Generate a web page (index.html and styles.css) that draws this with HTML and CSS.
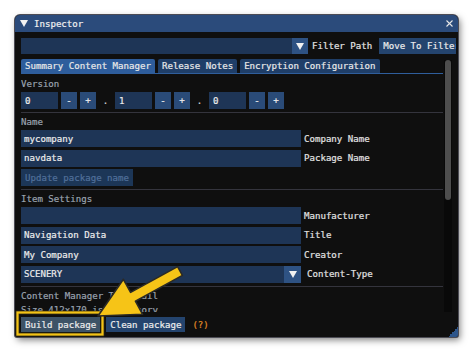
FILE: index.html
```html
<!DOCTYPE html>
<html>
<head>
<meta charset="utf-8">
<link rel="stylesheet" href="styles.css">
</head>
<body>
<div class="window">
  <div class="titlebar">
    <svg class="tri" width="8" height="7" viewBox="0 0 8 7"><polygon points="0,0 8,0 4,7" fill="#f2f2f2"/></svg>
    <span class="title">Inspector</span>
    <svg class="close" width="7" height="7" viewBox="0 0 7 7"><path d="M0.5 0.5 L6.5 6.5 M6.5 0.5 L0.5 6.5" stroke="#e6e6e6" stroke-width="1.1"/></svg>
  </div>
  <div class="filter">
    <div class="frame filter-input"></div>
    <div class="combo-btn"><svg width="8" height="7" viewBox="0 0 8 7"><polygon points="0,0 8,0 4,7" fill="#f2f2f2"/></svg></div>
    <span class="filter-label">Filter Path</span>
    <div class="btn move-btn">Move To Filter</div>
  </div>
  <div class="main">
    <div class="main-col">
      <div class="tabbar">
        <div class="tab active">Summary Content Manager</div>
        <div class="tab">Release Notes</div>
        <div class="tab">Encryption Configuration</div>
      </div>
      <div class="scroll">
        <div class="label first">Version</div>
        <div class="row version">
          <div class="frame num">0</div>
          <div class="btn sq">-</div>
          <div class="btn sq">+</div>
          <span class="dot">.</span>
          <div class="frame num">1</div>
          <div class="btn sq">-</div>
          <div class="btn sq">+</div>
          <span class="dot">.</span>
          <div class="frame num">0</div>
          <div class="btn sq">-</div>
          <div class="btn sq">+</div>
        </div>
        <div class="sep"></div>
        <div class="label">Name</div>
        <div class="row"><div class="frame field">mycompany</div><span class="rlabel">Company Name</span></div>
        <div class="row r2"><div class="frame field">navdata</div><span class="rlabel">Package Name</span></div>
        <div class="row r2"><div class="btn disabled">Update package name</div></div>
        <div class="sep"></div>
        <div class="label">Item Settings</div>
        <div class="row"><div class="frame field"></div><span class="rlabel">Manufacturer</span></div>
        <div class="row r3"><div class="frame field">Navigation Data</div><span class="rlabel">Title</span></div>
        <div class="row r3"><div class="frame field">My Company</div><span class="rlabel">Creator</span></div>
        <div class="row r3">
          <div class="frame field combo"><span class="combo-text">SCENERY</span><div class="combo-arrow"><svg width="8" height="7" viewBox="0 0 8 7"><polygon points="0,0 8,0 4,7" fill="#f2f2f2"/></svg></div></div>
          <span class="rlabel ct">Content-Type</span>
        </div>
        <div class="sep"></div>
        <div class="label">Content Manager Thumbnail</div>
        <div class="label size">Size 412x170 is mandatory</div>
      </div>
    </div>
    <div class="scrollbar"><div class="grab"></div></div>
  </div>
  <div class="bottom">
    <div class="btn build">Build package</div>
    <div class="btn">Clean package</div>
    <span class="help">(?)</span>
  </div>
  <div class="grip"></div>
</div>
<svg class="overlay" width="474" height="353" viewBox="0 0 474 353">
  <rect x="17.5" y="312.5" width="85" height="22" fill="none" stroke="#3a3216" stroke-width="3.6"/>
  <rect x="17.5" y="312.5" width="85" height="22" fill="none" stroke="#f3c316" stroke-width="2.2"/>
  <polygon points="98,316 142.6,314.3 135.4,301.2 182.4,275.4 177.6,266.6 130.6,292.4 123.4,279.3" fill="#f6c417" stroke="#2b2a26" stroke-width="1.6" stroke-linejoin="round"/>
</svg>
</body>
</html>
```

FILE: styles.css
```css
* { box-sizing: border-box; }

body {
  margin: 0;
  width: 474px;
  height: 353px;
  overflow: hidden;
  position: relative;
  background: #ffffff;
  font-family: "DejaVu Sans Mono", "Liberation Mono", monospace;
  font-size: 9.1px;
  color: #e4e4e4;
  -webkit-text-stroke: 0.2px currentColor;
}

.window {
  margin: 15px 0 0 15px;
  width: 443px;
  height: 322px;
  background: #0f0f0f;
  border-radius: 5px 5px 2px 2px;
  box-shadow: 0 0 0 1px #4c4c55, 2px 3px 7px rgba(0, 0, 0, 0.5);
  overflow: hidden;
  position: relative;
  display: flex;
  flex-direction: column;
  white-space: nowrap;
}

.titlebar {
  flex: none;
  height: 17px;
  background: #2b4b7b;
  display: flex;
  align-items: center;
  padding-left: 5px;
  color: #f0f0f0;
}

.tri { margin-right: 6px; flex: none; }

.close { margin-left: auto; margin-right: 5px; }

.filter {
  flex: none;
  margin-top: 6px;
  padding-left: 6px;
  width: 441px;
  height: 16px;
  display: flex;
  align-items: center;
  overflow: hidden;
}

.filter > * { flex-shrink: 0; }

.frame {
  background: #1e3556;
  height: 100%;
  display: flex;
  align-items: center;
  padding-left: 3px;
  color: #ececec;
}

.filter-input { width: 271px; }

.combo-btn {
  width: 16px;
  height: 16px;
  background: #2e5283;
  display: flex;
  align-items: center;
  justify-content: center;
}

.filter-label { margin-left: 4px; }

.btn {
  background: #24446e;
  padding: 0 4px;
  height: 100%;
  display: flex;
  align-items: center;
  color: #ececec;
}

.move-btn { margin-left: 7px; height: 16px; }

.main {
  flex: none;
  margin-top: 5px;
  padding-left: 6px;
  height: 253px;
  display: flex;
}

.main-col {
  width: 422px;
  display: flex;
  flex-direction: column;
}

.tabbar {
  flex: none;
  height: 15px;
  display: flex;
  gap: 3px;
  border-bottom: 1px solid #2f5e9c;
}

.tab {
  padding: 0 4px;
  background: #1f3e68;
  border-radius: 2px 2px 0 0;
  line-height: 14px;
  color: #e8e8e8;
}

.tab.active { background: #2e5d9c; }

.scroll {
  flex: 1;
  overflow: hidden;
}

.label {
  line-height: 12px;
  color: #9aa3af;
  margin-top: 3px;
}

.label.first { margin-top: 4px; }

.label.size { margin-top: 2px; }

.row {
  height: 17px;
  margin-top: 2px;
  display: flex;
  align-items: center;
}

.row.r2 { margin-top: 2.5px; }

.row.r3 { margin-top: 2.6px; }

.num { width: 37px; padding-left: 4px; }

.sq {
  width: 16px;
  justify-content: center;
  padding: 0;
  margin-left: 3px;
  background: #2a4b78;
}

.dot {
  width: 19px;
  text-align: center;
  color: #d8d8d8;
}

.sep {
  height: 1px;
  margin-top: 3px;
  background: #34343d;
}

.field { width: 280px; }

.rlabel { margin-left: 3px; color: #e2e2e2; }

.rlabel.ct { margin-left: 6px; }

.combo { padding-right: 0; justify-content: space-between; }

.combo-arrow {
  width: 17px;
  height: 100%;
  background: #2e5283;
  display: flex;
  align-items: center;
  justify-content: center;
}

.disabled {
  background: #1c3657;
  color: #51709a;
}

.scrollbar {
  width: 8px;
  margin-left: 1px;
  margin-top: 1px;
  padding: 0 1px;
  background: #090909;
}

.grab {
  height: 140px;
  background: #4e4e4e;
  border-radius: 3px;
}

.bottom {
  flex: none;
  margin-top: 5px;
  padding-left: 6px;
  height: 15px;
  display: flex;
  align-items: center;
  gap: 6px;
}

.build { background: #3d5367; }

.help { color: #e38d27; margin-left: 1px; }

.grip {
  position: absolute;
  right: 0;
  bottom: 0;
  width: 10px;
  height: 10px;
  background: linear-gradient(135deg, transparent 50%, #2d558a 50%);
}

.overlay {
  position: absolute;
  left: 0;
  top: 0;
}
```
